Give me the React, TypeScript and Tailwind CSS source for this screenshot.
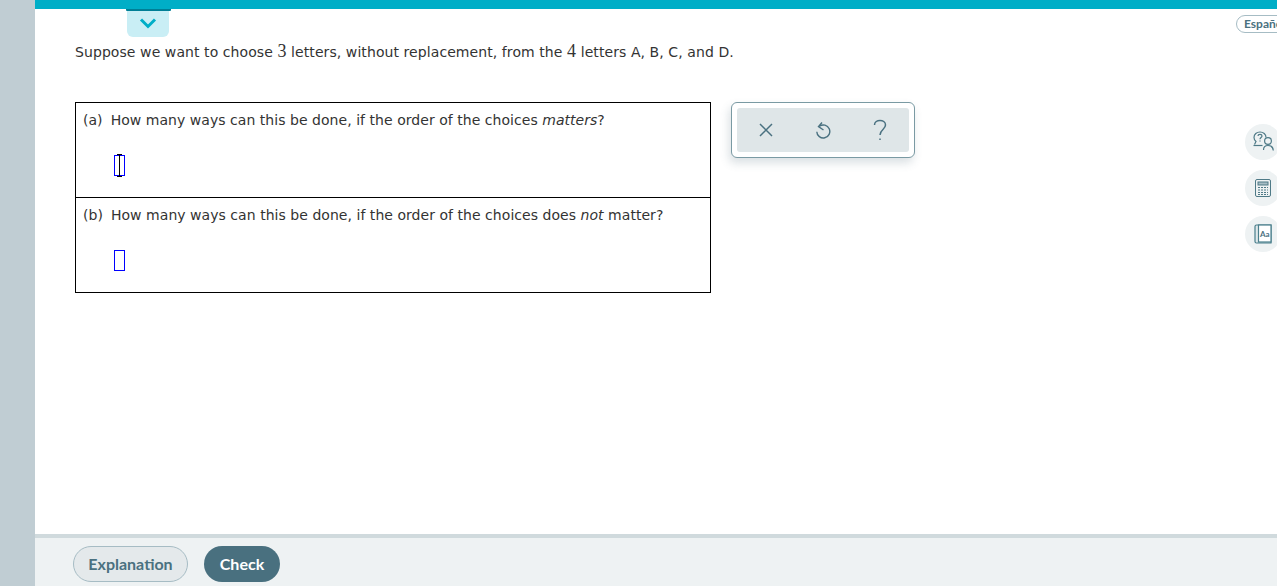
export default function App() {
  return (
    <div className="flex h-screen w-full overflow-hidden bg-white font-['DejaVu_Sans',sans-serif] text-[14px] tracking-[0.04px] text-[#333]">
      <div className="w-[35px] shrink-0 bg-[#c0cdd3]" />
      <div className="relative flex min-w-0 flex-1 flex-col">
        <div className="h-[9px] shrink-0 bg-[#00aec7]" />
        <div className="absolute left-[92px] top-[9px] flex h-[28px] w-[42px] flex-col items-center rounded-b-[6px] bg-[#c9eef5]">
          <div className="h-[2px] w-[45px] shrink-0 rounded-b-[1px] bg-[#007f96]" />
          <svg width="18" height="12" viewBox="0 0 18 12" className="mt-[6px]">
            <path d="M2 2.5 L9 9.5 L16 2.5" fill="none" stroke="#00aec7" strokeWidth="3" />
          </svg>
        </div>
        <div className="absolute left-[1201px] top-[15px] flex h-[18px] w-[70px] items-center rounded-full border border-[#a6bcc4] pl-[7px] font-['Lato',sans-serif] text-[12px] font-bold tracking-normal whitespace-nowrap text-[#4a7180]">
          Español
        </div>
        <div className="absolute left-[1210px] top-[124px] flex flex-col gap-[10px]">
          <div className="flex h-[36px] w-[36px] items-center justify-center rounded-full bg-[#eef2f3]">
            <svg width="24" height="24" viewBox="0 0 24 24" fill="none" stroke="#4f7a87" strokeWidth="1.2">
              <path d="M3.5 14.5 L5 11.5 C3.8 10.5 3 9 3 7.5 C3 4.3 5.7 2 9 2 C12.3 2 15 4.3 15 7.5" />
              <path d="M2.5 15.5 H11.5" />
              <circle cx="17" cy="11" r="3.4" />
              <path d="M12.5 20 C12.5 16.5 14.5 15.5 17 15.5 C19.5 15.5 22 16.5 22.3 20.5" />
              <path d="M7 6 C7 3.8 11 3.8 11 6 C11 7.5 9 7.5 9 9.2 M9 10.5 V11.5" />
            </svg>
          </div>
          <div className="flex h-[36px] w-[36px] items-center justify-center rounded-full bg-[#eef2f3]">
            <svg width="20" height="20" viewBox="0 0 20 20" fill="none" stroke="#4f7a87">
              <rect x="2.5" y="1.5" width="15" height="17" rx="1.5" />
              <rect x="5" y="4" width="10" height="3" fill="#a6bcc4" />
              <path d="M5 9.5h2M8 9.5h2M11 9.5h2M14 9.5h1M5 12h2M8 12h2M11 12h2M14 12h1M5 14.5h2M8 14.5h2M11 14.5h2M14 14.5h1M5 16.5h2M8 16.5h2M11 16.5h2M14 16.5h1" strokeWidth="1.2" />
            </svg>
          </div>
          <div className="relative flex h-[36px] w-[36px] items-center justify-center rounded-full bg-[#eef2f3]">
            <svg width="18" height="20" viewBox="0 0 18 20" fill="none" stroke="#4a7f8c" strokeWidth="1.2">
              <path d="M1 2.5 a1.5 1.5 0 0 1 1.5 -1.5 H17 V19 H2.5 a1.5 1.5 0 0 1 -1.5 -1.5 Z" fill="#dfe8ea" />
              <rect x="4.5" y="1" width="12.5" height="17" fill="#fff" />
            </svg>
            <span className="absolute left-[15px] top-[12px] font-['Lato',sans-serif] text-[8px] font-bold tracking-normal text-[#4a7180]">Aa</span>
          </div>
        </div>
        <div className="flex min-h-0 flex-1 flex-col pl-[40px]">
          <p className="mt-[33px] h-[18px] leading-[18px] tracking-[0.08px] whitespace-nowrap">
            Suppose we want to choose <span className="font-['Liberation_Serif',serif] text-[18px]">3</span> letters, without replacement, from the <span className="font-['Liberation_Serif',serif] text-[18px]">4</span> letters A, B, C, and D.
          </p>
          <div className="mt-[42px] flex items-start gap-[20px]">
            <div className="w-[636px] border border-black">
              <div className="h-[95px] border-b border-black pl-[7px] pt-[7px]">
                <p className="leading-[20px] whitespace-nowrap">
                  <span className="mr-[8px]">(a)</span>How many ways can this be done, if the order of the choices <em>matters</em>?
                </p>
                <div className="relative ml-[31px] mt-[25px] h-[21px] w-[11px] border border-[#0000ff]">
                  <div className="absolute left-[4px] top-[-2px] h-[23px] w-px bg-black" />
                  <div className="absolute left-[2px] top-[-2px] h-px w-[5px] bg-black" />
                  <div className="absolute bottom-[-2px] left-[2px] h-px w-[5px] bg-black" />
                </div>
              </div>
              <div className="h-[94px] pl-[7px] pt-[7px]">
                <p className="leading-[20px] whitespace-nowrap">
                  <span className="mr-[8px]">(b)</span>How many ways can this be done, if the order of the choices does <em>not</em> matter?
                </p>
                <div className="ml-[31px] mt-[25px] h-[21px] w-[11px] border border-[#0000ff]" />
              </div>
            </div>
            <div className="h-[56px] w-[184px] rounded-[6px] border border-[#7a9aa3] bg-white p-[5px] shadow-[-2px_5px_10px_rgba(70,100,115,0.2)]">
              <div className="flex h-[44px] items-center justify-between rounded-[3px] bg-[#dfe6e8] px-[21px]">
                <svg width="16" height="16" viewBox="0 0 16 16" fill="none" stroke="#4a7180" strokeWidth="1.5">
                  <path d="M2 2 L14 14 M14 2 L2 14" />
                </svg>
                <svg width="16" height="20" viewBox="0 0 16 20" fill="none" stroke="#4a7180" strokeWidth="1.4">
                  <path d="M4.5 6.2 A6.5 6.5 0 1 1 1.8 11.7" />
                  <path d="M7 2.5 L3.5 6.7 L8.5 10" />
                </svg>
                <svg width="16" height="24" viewBox="0 0 16 24" fill="none" stroke="#4a7180" strokeWidth="1.5">
                  <path d="M2.5 7 C2.5 1 13.5 1 13.5 7 C13.5 11.5 8 11.5 8 17" />
                  <path d="M8 20.5 V22" />
                </svg>
              </div>
            </div>
          </div>
        </div>
        <div className="flex h-[52px] shrink-0 items-start gap-[16px] border-t-4 border-[#d0dadd] bg-[#eef2f3] pl-[38px] pt-[8px] font-['Lato',sans-serif] text-[16px] font-bold tracking-normal">
          <div className="flex h-[36px] w-[115px] items-center justify-center rounded-full border border-[#a6bcc4] bg-[#e4e9eb] text-[#4a7180]">Explanation</div>
          <div className="flex h-[36px] w-[76px] items-center justify-center rounded-full bg-[#49707f] text-white">Check</div>
        </div>
      </div>
    </div>
  );
}
